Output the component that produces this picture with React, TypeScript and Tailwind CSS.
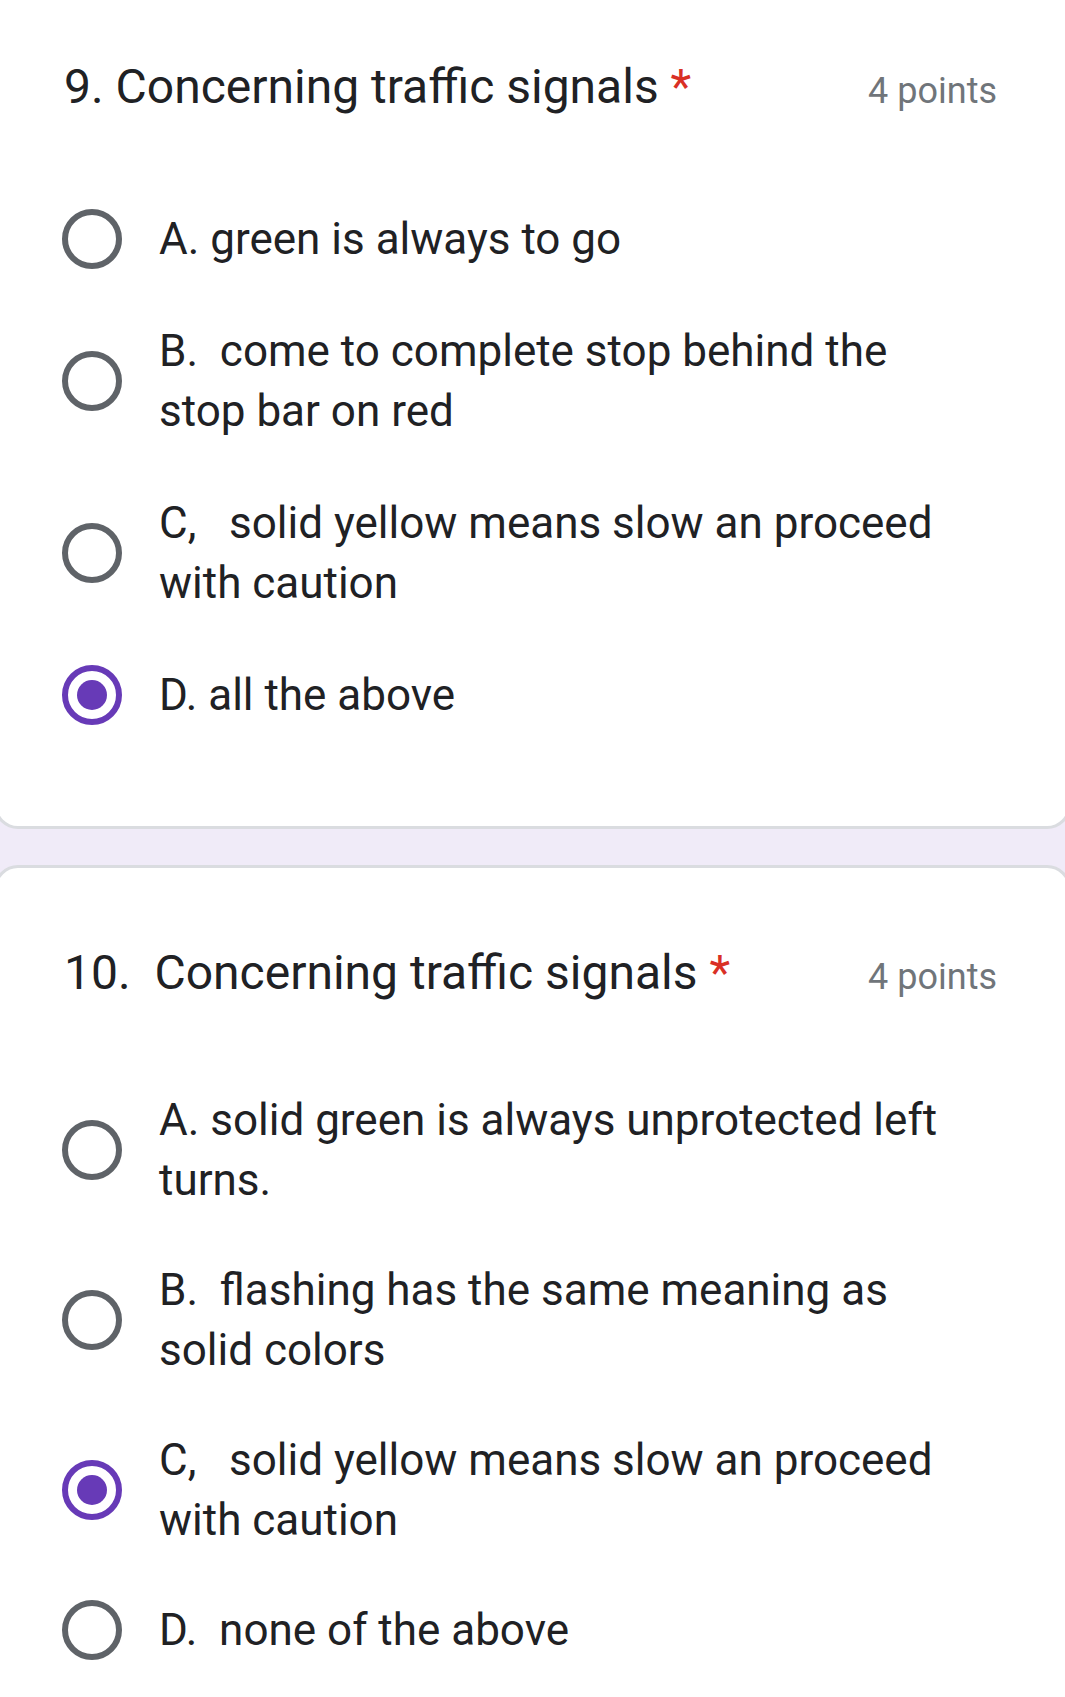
import React from "react";

type Option = { label: string; checked?: boolean };

type Question = {
  title: string;
  points: string;
  options: Option[];
  optionsTop: string;
  rowGap: string;
};

const questions: Question[] = [
  {
    title: "9. Concerning traffic signals",
    points: "4 points",
    optionsTop: "mt-[91px]",
    rowGap: "gap-[52px]",
    options: [
      { label: "A. green is always to go" },
      { label: "B.  come to complete stop behind the stop bar on red" },
      { label: "C,   solid yellow means slow an proceed with caution" },
      { label: "D. all the above", checked: true },
    ],
  },
  {
    title: "10.  Concerning traffic signals",
    points: "4 points",
    optionsTop: "mt-[86px]",
    rowGap: "gap-[50px]",
    options: [
      { label: "A. solid green is always unprotected left turns." },
      { label: "B.  flashing has the same meaning as solid colors" },
      { label: "C,   solid yellow means slow an proceed with caution", checked: true },
      { label: "D.  none of the above" },
    ],
  },
];

function Radio({ checked }: { checked?: boolean }) {
  return (
    <div
      className={`w-[60px] h-[60px] shrink-0 rounded-full border-[6px] flex items-center justify-center ${
        checked ? "border-[#673ab7]" : "border-[#5f6368]"
      }`}
    >
      {checked && <div className="w-[30px] h-[30px] rounded-full bg-[#673ab7]" />}
    </div>
  );
}

function QuestionBody({ title, points, options, optionsTop, rowGap }: Question) {
  return (
    <>
      <div className="flex items-baseline justify-between">
        <div className="text-[48px] leading-[60px] text-[#202124] whitespace-pre">
          {title} <span className="text-[#d93025]">*</span>
        </div>
        <div className="text-[36px] text-[#70757a]">{points}</div>
      </div>
      <div className={`flex flex-col -ml-[2px] ${rowGap} ${optionsTop}`}>
        {options.map((o) => (
          <div key={o.label} className="flex items-center gap-[37px] pr-[36px]">
            <Radio checked={o.checked} />
            <div className="text-[44px] leading-[60px] text-[#202124] whitespace-pre-wrap">
              {o.label}
            </div>
          </div>
        ))}
      </div>
    </>
  );
}

export default function App() {
  return (
    <div className="min-h-screen bg-[#f0ebf8] font-['Roboto',sans-serif] overflow-hidden">
      <div className="-mx-[6px] bg-white border-x-[3px] border-b-[3px] border-[#dadce0] rounded-b-[24px] pt-[57px] pb-[101px] pl-[67px] pr-[71px]">
        <QuestionBody {...questions[0]} />
      </div>
      <div className="-mx-[6px] mt-[36px] bg-white border-[3px] border-[#dadce0] rounded-[24px] pt-[75px] pb-[60px] pl-[67px] pr-[71px]">
        <QuestionBody {...questions[1]} />
      </div>
    </div>
  );
}
